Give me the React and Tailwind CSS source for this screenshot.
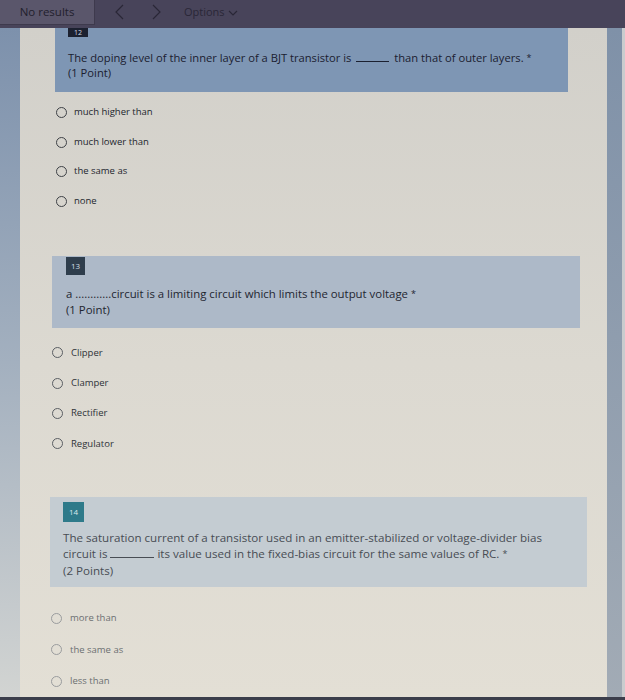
import React from "react";

function Radio({ border }) {
  return (
    <span className={`inline-block w-[11px] h-[11px] rounded-full border-[1.5px] ${border} shrink-0`} />
  );
}

function Option({ label, h, ml, gap, border, text }) {
  return (
    <div className={`flex items-center ${h} ${ml}`}>
      <Radio border={border} />
      <span className={`${gap} text-[9.5px] ${text}`}>{label}</span>
    </div>
  );
}

export default function App() {
  const font = { fontFamily: '"Open Sans", "Noto Sans", Arial, sans-serif' };
  return (
    <div className="w-[625px] h-[700px] overflow-hidden flex flex-col bg-[#dcd9d1]" style={font}>
      {/* top bar */}
      <div className="h-[28px] shrink-0 flex items-start bg-[#48445a]">
        <div className="w-[95px] h-[25px] bg-[#5a566b] flex items-center justify-center text-[11.5px] text-[#22202d] border-r border-b border-[#3e3a4d]">
          No results
        </div>
        <div className="h-[24px] flex items-center ml-[18px] text-[#2a2737]">
          <svg width="13" height="18" viewBox="0 0 13 18">
            <path d="M10 2 L3 9 L10 16" fill="none" stroke="#2a2737" strokeWidth="1.2" />
          </svg>
          <svg width="13" height="18" viewBox="0 0 13 18" className="ml-[24px]">
            <path d="M3 2 L10 9 L3 16" fill="none" stroke="#2a2737" strokeWidth="1.2" />
          </svg>
          <span className="ml-[21px] text-[11px]">Options</span>
          <svg width="10" height="8" viewBox="0 0 10 8" className="ml-[3px] mt-[2px]">
            <path d="M1 2 L5 6 L9 2" fill="none" stroke="#2a2737" strokeWidth="1.2" />
          </svg>
        </div>
      </div>

      {/* body */}
      <div className="flex-1 flex min-h-0">
        <div className="w-[20px] shrink-0 bg-gradient-to-b from-[#7d91ac] via-[#a3b0bf] to-[#d2d4d2]" />
        <div className="flex-1 flex flex-col bg-gradient-to-b from-[#d2d0ca] via-[#dcd9d1] to-[#e3dfd5]">
          {/* Q12 */}
          <div className="ml-[35px] w-[513px] h-[64px] bg-[#7e96b4] pl-[13px] flex flex-col">
            <div className="w-[20px] h-[9px] bg-[#1c2130] text-[7px] text-[#cfd6e0] flex items-end justify-center leading-none pb-[1px]">12</div>
            <div className="mt-[13px] text-[11.2px] leading-[15px] text-[#1b2030]">
              The doping level of the inner layer of a BJT transistor is{" "}
              <span className="inline-block w-[33px] border-b border-[#1b2030] mx-[2px]" />{" "}
              than that of outer layers. <span className="text-[9px] align-top">*</span>
            </div>
            <div className="text-[11.2px] leading-[15px] text-[#1b2030]">(1 Point)</div>
          </div>
          <div className="mt-[6px] flex flex-col">
            {["much higher than", "much lower than", "the same as", "none"].map((l) => (
              <Option key={l} label={l} h="h-[29.5px]" ml="ml-[36px]" gap="ml-[7px]" border="border-[#3e4146]" text="text-[#22262d]" />
            ))}
          </div>

          {/* Q13 */}
          <div className="mt-[40px] ml-[32px] w-[528px] h-[72px] bg-[#adb9c8] pl-[14px] flex flex-col">
            <div className="mt-[1px] w-[19px] h-[18px] bg-[#2e3d4c] text-[8px] text-[#d5dde5] flex items-center justify-center">13</div>
            <div className="mt-[10px] text-[11.4px] leading-[17px] text-[#1f2631]">
              a ............circuit is a limiting circuit which limits the output voltage{" "}
              <span className="text-[9px] align-top">*</span>
            </div>
            <div className="text-[11.4px] leading-[16px] text-[#1f2631]">(1 Point)</div>
          </div>
          <div className="mt-[10px] flex flex-col">
            {["Clipper", "Clamper", "Rectifier", "Regulator"].map((l) => (
              <Option key={l} label={l} h="h-[30.3px]" ml="ml-[32px]" gap="ml-[8px]" border="border-[#5a5e63]" text="text-[#2e3238]" />
            ))}
          </div>

          {/* Q14 */}
          <div className="mt-[38px] ml-[30px] w-[537px] h-[90px] bg-[#c4ccd2] pl-[13px] flex flex-col">
            <div className="mt-[5px] w-[21px] h-[20px] bg-[#2e7a8a] text-[8px] text-[#dbe9ec] flex items-center justify-center">14</div>
            <div className="mt-[8px] text-[11.6px] leading-[16.5px] text-[#484d54]">
              The saturation current of a transistor used in an emitter-stabilized or voltage-divider bias
              <br />
              circuit is{" "}
              <span className="inline-block w-[44px] border-b border-[#484d54]" />{" "}
              its value used in the fixed-bias circuit for the same values of RC.{" "}
              <span className="text-[9px] align-top">*</span>
              <br />
              (2 Points)
            </div>
          </div>
          <div className="mt-[16px] flex flex-col">
            {["more than", "the same as", "less than"].map((l) => (
              <Option key={l} label={l} h="h-[31.5px]" ml="ml-[31px]" gap="ml-[8px]" border="border-[#9a9c9e]" text="text-[#6c6f72]" />
            ))}
          </div>
        </div>
        <div className="w-[18px] shrink-0 flex">
          <div className="flex-1 bg-gradient-to-b from-[#7f91a8] to-[#a2abb5]" />
          <div className="w-[3px] bg-[#c9ccce]" />
        </div>
      </div>
      <div className="h-[3px] shrink-0 bg-[#3b3e4b]" />
    </div>
  );
}
